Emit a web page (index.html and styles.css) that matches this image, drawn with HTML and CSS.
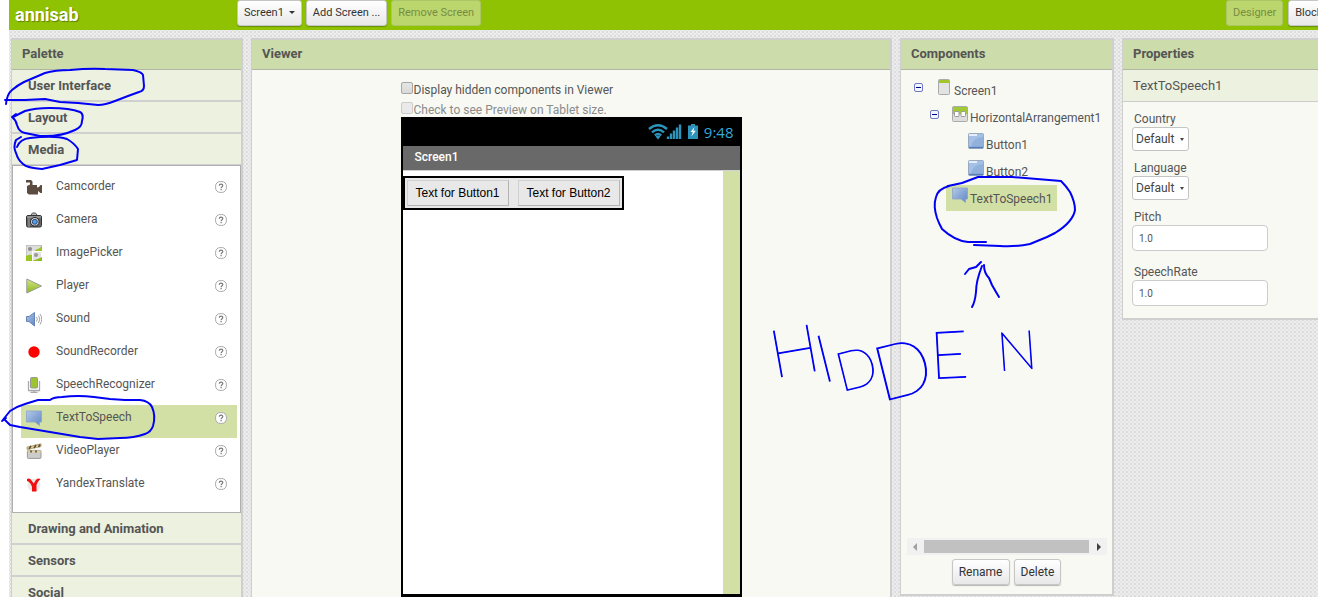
FILE: index.html
```html
<!DOCTYPE html>
<html lang="en">
<head>
<meta charset="utf-8">
<title>annisab</title>
<link rel="stylesheet" href="styles.css">
</head>
<body>
<svg class="defs" aria-hidden="true">
  <defs>
    <linearGradient id="blue" x1="0" y1="0" x2="1" y2="1"><stop offset="0" stop-color="#b4c9e8"/><stop offset="1" stop-color="#5f86c4"/></linearGradient>
    <linearGradient id="green" x1="0" y1="0" x2="0" y2="1"><stop offset="0" stop-color="#d3e68c"/><stop offset="1" stop-color="#8cb81c"/></linearGradient>
    <symbol id="help" viewBox="0 0 12 12"><rect x=".6" y=".6" width="10.8" height="10.8" rx="4.5" fill="#fff" stroke="#aaa"/><path d="M4.3 4.7C4.3 2.6 7.8 2.6 7.8 4.6C7.8 5.8 6.1 5.6 6.1 7.2M6.1 8.1V9.3" fill="none" stroke="#777" stroke-width="1.2"/></symbol>
    <symbol id="speech" viewBox="0 0 16 16"><path d="M.5 1H15.5V12H13.5V15.5L9 12H.5Z" fill="url(#blue)" stroke="#8ba3cb" stroke-width=".8"/></symbol>
    <symbol id="button" viewBox="0 0 16 16"><rect x=".5" y=".5" width="15" height="15" rx="1" fill="#91b1dc" stroke="#9aa9c2"/><path d="M1 1H15V4Q5 4 3 14H1Z" fill="#a5c0e5"/><path d="M1 1H9V3H1Z" fill="#e4edf8"/><path d="M1 14.5H15" stroke="#557fb8" stroke-width="1.4"/></symbol>
    <symbol id="minus" viewBox="0 0 9 9"><rect x=".5" y=".5" width="8" height="8" rx="1.5" fill="#f3f6ff" stroke="#6d7bc0"/><path d="M2 4.5H7" stroke="#00008b"/></symbol>
  </defs>
</svg>
<div class="app">
  <header class="topbar">
    <h1 class="project">annisab</h1>
    <div class="screens">
      <button class="btn">Screen1<span class="caret"></span></button>
      <button class="btn">Add Screen ...</button>
      <button class="btn" disabled>Remove Screen</button>
    </div>
    <div class="modes">
      <button class="btn" disabled>Designer</button>
      <button class="btn">Blocks</button>
    </div>
  </header>

  <main class="workspace">
    <section class="panel palette">
      <h2 class="panel-title">Palette</h2>
      <button class="category">User Interface</button>
      <button class="category">Layout</button>
      <button class="category">Media</button>
      <ul class="components-list">
        <li><svg class="icon" viewBox="0 0 16 16"><path d="M0 1H5L6.500 2.500V6H11V8.500L13 8L14.500 6H16V14H14.500L12 12V15.500H3L1 14V7L4 5.500V3.500H0Z" fill="#5c4b40"/></svg><span>Camcorder</span><svg class="help"><use href="#help"/></svg></li>
        <li><svg class="icon" viewBox="0 0 16 16"><path d="M5 3L6.500 1H9.500L11 3" fill="#bbb" stroke="#555"/><rect x=".5" y="3.500" width="15" height="11.500" rx="1.500" fill="#666" stroke="#333"/><path d="M1 5H15" stroke="#bbb"/><path d="M3 5V15" stroke="#999"/><circle cx="8.800" cy="9.800" r="4.300" fill="#ddd" stroke="#222"/><circle cx="8.800" cy="9.800" r="2.500" fill="#5b9be0" stroke="#244a80"/></svg><span>Camera</span><svg class="help"><use href="#help"/></svg></li>
        <li><svg class="icon" viewBox="0 0 16 16"><rect x=".4" y=".4" width="15.200" height="15.200" fill="#ddd" stroke="#bbb" stroke-width=".8"/><path d="M0 11Q4 9 6 10V16H0Z" fill="#9bc521"/><path d="M9 5Q13 4 16 1V6H9Z" fill="#9bc521"/><circle cx="4" cy="4" r="2" fill="#8d8d8d"/><path d="M6.500 6.500H15.500V15.500H6.500Z" fill="#e2e2e2" stroke="#fff"/><circle cx="10" cy="10" r="2" fill="#999"/><path d="M7 15.500Q12 14 16 12V16H7Z" fill="#8fbd18"/></svg><span>ImagePicker</span><svg class="help"><use href="#help"/></svg></li>
        <li><svg class="icon" viewBox="0 0 16 16"><path d="M.8 1L15.500 8L.8 15Z" fill="url(#green)" stroke="#999"/></svg><span>Player</span><svg class="help"><use href="#help"/></svg></li>
        <li><svg class="icon" viewBox="0 0 16 16"><path d="M.5 5.500H3L8.500 1.500V15L3 10.500H.5Z" fill="url(#blue)" stroke="#6484b5"/><path d="M10.500 6Q12 8 10.500 10.500M12.500 4.500Q15 8 12.500 12M14 3Q17.500 8 14 13.500" fill="none" stroke="#999" stroke-width=".9"/></svg><span>Sound</span><svg class="help"><use href="#help"/></svg></li>
        <li><svg class="icon" viewBox="0 0 16 16"><circle cx="8" cy="8" r="5.700" fill="#f00"/></svg><span>SoundRecorder</span><svg class="help"><use href="#help"/></svg></li>
        <li><svg class="icon" viewBox="0 0 16 16"><path d="M2.500 4V13.500H13.500V4M8 13.500V15.500M4.500 15.500H11.500" fill="none" stroke="#aaa" stroke-width="1.300"/><rect x="4.500" y=".5" width="7" height="10.500" rx="1" fill="#9dc232" stroke="#999"/></svg><span>SpeechRecognizer</span><svg class="help"><use href="#help"/></svg></li>
        <li class="selected"><svg class="icon"><use href="#speech"/></svg><span>TextToSpeech</span><svg class="help"><use href="#help"/></svg></li>
        <li><svg class="icon" viewBox="0 0 16 16"><path d="M1 4L15 .8V3.500L1 6.500Z" fill="#e6d3a3" stroke="#9b8a5c" stroke-width=".7"/><path d="M3 6L5 3M8 5L10 2M12.500 4L14 1.500" stroke="#5f5130" stroke-width="1.600"/><rect x="1.400" y="7.400" width="13.600" height="8" rx="1" fill="#ccc" stroke="#999"/><path d="M2 8.500H14.500" stroke="#e3d1a2" stroke-width="2"/><path d="M4 8.500H6M9 8.500H11" stroke="#776746" stroke-width="2"/></svg><span>VideoPlayer</span><svg class="help"><use href="#help"/></svg></li>
        <li><svg class="icon" viewBox="0 0 16 16"><circle cx="8" cy="9" r="6.500" fill="#e9e9e9"/><path d="M1 3Q4 1.500 5.500 4.500L7.800 7.500L9.500 4.500Q11.500 1.500 14.500 3Q12 5 10.500 9V15.500H6V11Q4.500 6 1 5Z" fill="#f01010"/></svg><span>YandexTranslate</span><svg class="help"><use href="#help"/></svg></li>
      </ul>
      <button class="category">Drawing and Animation</button>
      <button class="category">Sensors</button>
      <button class="category">Social</button>
    </section>

    <section class="panel viewer">
      <h2 class="panel-title">Viewer</h2>
      <div class="stage">
        <label class="check"><input type="checkbox">Display hidden components in Viewer</label>
        <label class="check off"><input type="checkbox" disabled>Check to see Preview on Tablet size.</label>
        <div class="phone">
          <div class="status">
            <svg width="34" height="16" viewBox="0 0 34 16"><g fill="none" stroke="#2c93bb" stroke-width="2.400"><path d="M1 5Q10 -2.500 19 5M4 8.300Q10 3 16 8.300M6.800 11.300Q10 8.500 13.200 11.300"/></g><path d="M7.500 12.500Q10 10.500 12.500 12.500L10 15.500Z" fill="#2c93bb"/><path d="M20 15V12.500M23 15V9.500M26 15V6.500M29 15V3.500M32 15V.5" stroke="#2c93bb" stroke-width="2.400"/></svg>
            <svg width="10" height="15" viewBox="0 0 10 15"><path d="M3 0H7V1.500H10V15H0V1.500H3Z" fill="#2c93bb"/><path d="M6.500 3L2.500 8H4.800L3.300 12.500L7.800 6.800H5.300Z" fill="#fff"/></svg>
            <span>9:48</span>
          </div>
          <div class="screen-title">Screen1</div>
          <div class="screen">
            <div class="canvas">
              <div class="arrangement"><button>Text for Button1</button><button>Text for Button2</button></div>
            </div>
          </div>
        </div>
      </div>
    </section>

    <section class="panel tree-panel">
      <h2 class="panel-title">Components</h2>
      <ul class="tree">
        <li><svg class="toggle"><use href="#minus"/></svg><svg class="node-icon phone-icon" viewBox="0 0 12 16"><rect x=".5" y=".5" width="11" height="15" rx="1" fill="#e3e3e3" stroke="#aaa"/><path d="M1 1H11V4H1Z" fill="#a3c62b"/></svg><span>Screen1</span></li>
        <li class="level-1"><svg class="toggle"><use href="#minus"/></svg><svg class="node-icon" viewBox="0 0 16 16"><rect x=".5" y=".5" width="15" height="15" rx="1" fill="#ddd" stroke="#aaa"/><path d="M1 1H15V8H1Z" fill="#a1c936"/><rect x="2.500" y="5.500" width="4.500" height="5" rx="1" fill="#fff" stroke="#999"/><rect x="9" y="5.500" width="4.500" height="5" rx="1" fill="#fff" stroke="#999"/></svg><span>HorizontalArrangement1</span></li>
        <li class="level-2"><svg class="node-icon"><use href="#button"/></svg><span>Button1</span></li>
        <li class="level-2"><svg class="node-icon"><use href="#button"/></svg><span>Button2</span></li>
        <li class="leaf"><svg class="node-icon"><use href="#speech"/></svg><span>TextToSpeech1</span></li>
      </ul>
      <div class="scrollbar"><i class="arrow left"></i><i class="thumb"></i><i class="arrow right"></i></div>
      <div class="actions"><button class="btn">Rename</button><button class="btn">Delete</button></div>
    </section>

    <section class="panel properties">
      <h2 class="panel-title">Properties</h2>
      <h3 class="object-name">TextToSpeech1</h3>
      <form class="fields">
        <div class="field"><label for="country">Country</label><div class="select"><select id="country"><option>Default</option></select></div></div>
        <div class="field"><label for="language">Language</label><div class="select"><select id="language"><option>Default</option></select></div></div>
        <div class="field tall"><label for="pitch">Pitch</label><input id="pitch" type="text" value="1.0"></div>
        <div class="field"><label for="rate">SpeechRate</label><input id="rate" type="text" value="1.0"></div>
      </form>
    </section>
  </main>

  <svg class="ink" width="1318" height="597" viewBox="0 0 1318 597">
    <g class="strokes">
      <path d="M6 104Q7 94 12 90Q18 85 24 82L45 73Q55 70 70 70Q90 68 105 69L133 70Q142 72 143 75L144 86Q144 91 139 92L128 96L115 101Q105 105 98 105L78 103L60 102L45 99L25 100L5 100"/>
      <path d="M16 114L12 117Q16 120 17 125Q19 132 25 133L40 136Q60 137 75 130Q82 127 82 121Q84 114 80 112Q70 108 50 108Q35 108 25 111L13 117"/>
      <path d="M21 137L16 140Q13 147 16 153Q18 160 23 164Q27 168 42 169L60 165L77 160L78 149Q74 143 67 139Q55 135 30 138Q20 139 17 147"/>
      <path d="M6 418L2 421L10 411Q18 406 25 404L38 400L50 400Q54 397 62 397Q78 395 94 397L110 399L125 400H140Q149 401 152 407Q156 416 153 426Q151 432 145 434Q134 438 120 438L98 439L80 437L50 432L20 427L10 425L5 420"/>
      <path d="M948 186L962 183L978 177H1012L1061 181Q1066 186 1070 192Q1075 202 1075 210Q1073 222 1055 233L1047 237L1030 244Q1015 247 1000 246L974 245"/>
      <path d="M949 186Q938 189 936 197Q933 206 937 218L939 223L942 229Q955 241 968 242H986"/>
      <path d="M965 274L969 269L976 267L981 262M982 266Q976 281 976 292Q975 302 972 307M984 265Q984 273 989 278L992 285L996 292L999 297"/>
    </g>
    <text class="note"><tspan x="774" y="378" rotate="-10" class="medium">H</tspan><tspan x="822" y="383" rotate="-14" class="medium">I</tspan><tspan x="841" y="392" rotate="-14" class="small">D</tspan><tspan x="881" y="402" rotate="-14" class="large">D</tspan><tspan x="931" y="379" rotate="-3" class="medium">E</tspan><tspan x="998" y="371" rotate="-4" class="small">N</tspan></text>
  </svg>
</div>
</body>
</html>
```

FILE: styles.css
```css
* { box-sizing: border-box; }
body { margin: 0; background: #fff; color: #555; font: 12px/16px Roboto, sans-serif; }
h1, h2, h3, ul { margin: 0; padding: 0; list-style: none; }
button, input, select { font: inherit; color: inherit; }
.defs { position: absolute; width: 0; height: 0; }

.app {
  position: relative;
  height: 100vh;
  padding-left: 9px;
  overflow: hidden;
}
.topbar { display: flex; align-items: flex-start; height: 30px; padding-left: 6px; background: #8fc202; }
.project { width: 222px; color: #fff; font-size: 18px; line-height: 30px; text-shadow: 1px 1px 1px #5d8200; }
.screens { display: flex; gap: 4px; flex: 1; }
.modes { display: flex; gap: 5px; width: 92px; }
.btn {
  flex: none;
  height: 26px;
  padding: 0 6px;
  border: 1px solid #c6c6c6;
  border-radius: 3px;
  background: linear-gradient(#fff, #e8e8e8);
  box-shadow: 0 1px 1px #0004;
  color: #333;
  white-space: nowrap;
}
.topbar .btn { font-size: 11px; }
.btn:disabled { background: #bbd66d; border-color: #acc667; color: #788d42; box-shadow: none; }
.caret { display: inline-block; margin-left: 5px; border: 3px solid transparent; border-top-color: #333; border-bottom: 0; vertical-align: 2px; }

.workspace {
  display: grid;
  grid-template-columns: 232px 1fr 214px 196px;
  gap: 8px;
  align-items: start;
  height: calc(100vh - 30px);
  padding: 8px 0 0 2px;
  background-color: #ededed;
  background-image: radial-gradient(#dcdcdc 1px, transparent 1px), radial-gradient(#e4e4e4 1px, transparent 1px);
  background-size: 4px 4px, 4px 4px;
  background-position: 0 0, 2px 2px;
}
.panel { border: 2px solid #cfcfcf; border-width: 2px 2px 2px 1px; background: #f8f9f3; }
.panel-title { height: 30px; padding-left: 10px; border-bottom: 1px solid #b0b5a5; background: #ccdcaa; font-size: 13px; line-height: 28px; }
.category { display: block; width: 100%; height: 32px; padding: 1px 0 0 16px; border: 0; border-bottom: 2px solid #d0d0d0; background: #ecf1e0; font-size: 13px; font-weight: 700; text-align: left; }
.components-list { margin: -1px 0 0; padding: 8px 3px 8px 8px; border: 1px solid #b0b0b0; background: #fff; }
.components-list li { display: flex; align-items: flex-start; height: 33px; padding: 4px 10px 0 5px; }
.components-list span { flex: 1; margin-left: 14px; }
.components-list .selected { background: #d2e0a6; }
.icon { width: 16px; height: 16px; margin-top: 1px; }
.help { width: 12px; height: 12px; margin-top: 3px; }

.viewer { min-height: 100vh; }
.stage { display: flex; flex-direction: column; width: 341px; margin: 0 auto; padding-top: 10px; }
.check { display: flex; align-items: center; height: 20px; }
.check + .check { height: 17px; padding-top: 3px; }
.check.off { color: #8b8b8b; }
.check input { appearance: none; width: 12px; height: 12px; margin: 0 1px 4px 0; border: 1px solid #a6a6a6; border-radius: 2px; background: linear-gradient(#e5e5e5, #dadada); }
.check input:disabled { border-color: #ccc; background: #eaeaea; }
.phone { border: solid #000; border-width: 0 2px 3px; background: #000; }
.status { display: flex; align-items: center; justify-content: flex-end; gap: 6px; height: 29px; padding-right: 6px; color: #33a9dc; font: 15px "Open Sans", sans-serif; }
.screen-title { height: 25px; padding-left: 12px; border-bottom: 1px solid #d0d0d0; background: #696969; color: #fff; font-weight: 500; line-height: 22px; }
.screen { min-height: 423px; padding-right: 17px; background: #d2e0a6; }
.canvas { min-height: 423px; padding-top: 5px; background: #fff; }
.arrangement { display: inline-flex; gap: 9px; padding: 2px; border: 2px solid #000; background: #e8e8e8; }
.arrangement button { width: 102px; height: 26px; padding: 0; border: 1px solid #d0d0d0; border-right-color: #b4b4b4; border-bottom-color: #b4b4b4; background: #e8e8e8; color: #000; font: 12px "Liberation Sans", Arial, sans-serif; }

.tree-panel { height: 558px; display: flex; flex-direction: column; }
.tree { flex: 1; padding: 7px 0 0 13px; }
.tree li { display: flex; align-items: flex-start; height: 26px; margin-bottom: 1px; }
.tree span { margin: 6px 0 0 2px; }
.toggle { width: 9px; height: 9px; margin: 6px 15px 0 0; }
.node-icon { width: 16px; height: 16px; margin-top: 2px; }
.tree .phone-icon { width: 12px; margin-right: 2px; }
.tree .level-1 { padding-left: 16px; }
.tree .level-1 .toggle { margin-right: 13px; }
.tree .level-2 { padding-left: 54px; }
.tree .leaf { width: 111px; margin-left: 32px; padding-left: 6px; background: #d2e0a6; }
.scrollbar { display: flex; align-items: center; justify-content: space-between; height: 17px; margin: 0 5px 4px 6px; padding: 0 6px; background: #f1f1f1; }
.arrow { border: 4px solid transparent; }
.left { border-right: 4px solid #a0a0a0; border-left: 0; }
.right { border-left: 4px solid #404040; border-right: 0; }
.thumb { flex: 1; height: 13px; margin: 0 8px 0 7px; background: #c1c1c1; }
.actions { display: flex; justify-content: center; gap: 4px; padding: 0 0 9px; }

.properties { border-right: 0; }
.object-name { height: 32px; padding-left: 10px; border-bottom: 1px solid #ccc; background: #ecf1e0; font-size: 13px; font-weight: 400; line-height: 31px; }
.fields { padding: 9px 9px 5px; }
.field { height: 49px; }
.field.tall { height: 55px; }
.field label { display: block; height: 16px; padding-left: 2px; }
.field input { width: 136px; height: 26px; padding: 0 6px; border: 1px solid #ccc; border-radius: 4px; background: #fff; font-size: 10px; }
.select { position: relative; width: 57px; }
.select select { appearance: none; display: block; width: 100%; height: 24px; padding: 0 3px; border: 1px solid #c4c4c4; border-radius: 3px; background: #fff; color: #444; }
.select::after { content: ""; position: absolute; top: 11px; right: 5px; border: 2px solid transparent; border-top: 3px solid #444; border-bottom: 0; pointer-events: none; }

.ink { position: absolute; top: 0; left: 0; pointer-events: none; }
.strokes { fill: none; stroke: #0000f5; stroke-width: 2; stroke-linecap: round; stroke-linejoin: round; }
.note { fill: #0000f5; stroke: #0000f5; stroke-width: 1px; font-family: Lato, sans-serif; font-weight: 100; }
.small { font-size: 54px; }
.medium { font-size: 66px; }
.large { font-size: 76px; }
```
